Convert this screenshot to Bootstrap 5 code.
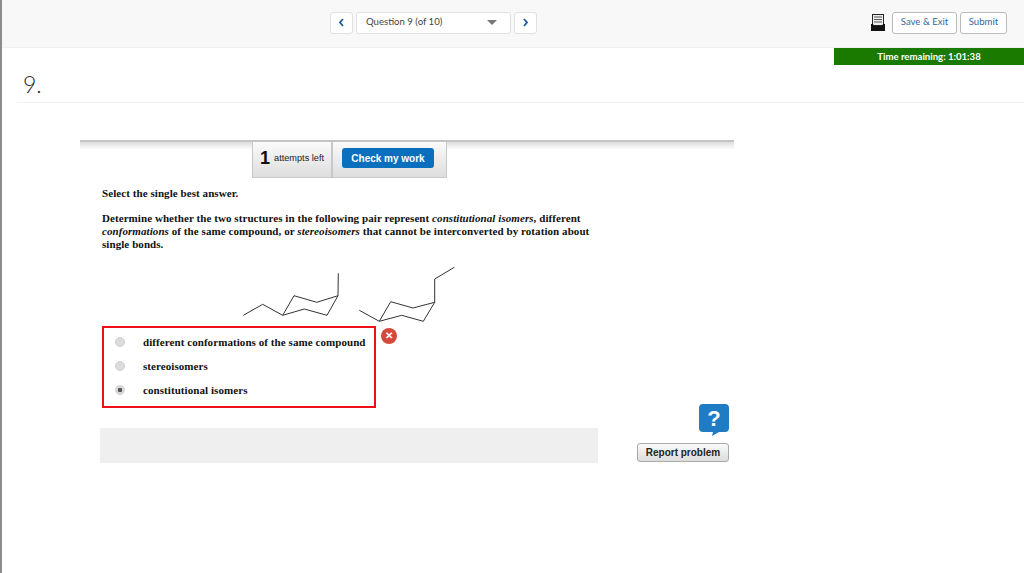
<!DOCTYPE html>
<html lang="en"><head>
  <meta charset="UTF-8">
  <meta name="viewport" content="width=device-width, initial-scale=1.0">
  <title>Question 9</title>
  <link href="https://cdn.jsdelivr.net/npm/bootstrap@5.3.0/dist/css/bootstrap.min.css" rel="stylesheet">
  <style>
    html, body { height: 100%; }
    body {
      font-family: "Lato", "Liberation Sans", sans-serif;
      background: #fff;
      overflow: hidden;
    }
    .left-rule { border-left: 2px solid #8c8c8c; min-height: 573px; }
    .top-bar {
      height: 48px;
      padding-bottom: 2px;
      background: #f8f8f8;
      border-bottom: 1px solid #f1f1f1;
    }
    .bar-side { width: 328px; }
    .nav-box {
      height: 22px;
      background: #fff;
      border: 1px solid #e1e1e1;
      border-radius: 3px;
      color: #444;
      font-size: 9.6px;
    }
    .nav-arrow { width: 23px; }
    .question-pick { width: 155px; padding: 0 13px 0 9px; margin: 0 3px; }
    .pick-caret {
      width: 0; height: 0;
      border-left: 5px solid transparent;
      border-right: 5px solid transparent;
      border-top: 5px solid #777;
    }
    .head-actions { padding-right: 17px; gap: 3px; }
    .head-btn {
      height: 22px;
      padding: 0;
      background: #fff;
      border: 1px solid #bbb;
      border-radius: 3px;
      color: #35659c;
      font-size: 9.6px;
    }
    .save-btn { width: 65px; }
    .send-btn { width: 47px; }
    .timer-box {
      width: 190px;
      height: 17px;
      background: #1a7a00;
      color: #fff;
      font-size: 9.6px;
      font-weight: 700;
      line-height: 17px;
      text-align: center;
    }
    .num-head {
      margin: 0 0 0 15px;
      padding: 7px 0 5px 6px;
      height: 38px;
      border-bottom: 1px solid #f2f2f2;
      color: #222;
      font-size: 23px;
      font-weight: 300;
      line-height: 24px;
    }
    .quiz-area { width: 654px; margin: 37px 0 0 78px; }
    .tool-line {
      height: 38px;
      padding-left: 172px;
      border-top: 2px solid #c4c4c4;
      background: linear-gradient(#ddd, #fff 8px) no-repeat top / 100% 8px;
    }
    .tool-cell {
      height: 36px;
      padding-bottom: 3px;
      border: 1px solid #c8c8c8;
      border-top: 0;
      background: linear-gradient(#fafafa, #dedede);
    }
    .attempts-cell { width: 80px; padding-left: 7px; gap: 4px; font-family: "Liberation Sans", sans-serif; font-size: 9.2px; color: #222; }
    .attempts-cell b { font-size: 18px; color: #111; line-height: 1; }
    .attempts-cell span { padding-top: 1px; }
    .check-cell { width: 115px; padding-left: 9px; }
    .check-btn {
      height: 20px;
      width: 92px;
      padding: 0;
      border: 0;
      border-radius: 3px;
      background: #0a70bd;
      color: #fff;
      font-family: "Liberation Sans", sans-serif;
      font-size: 10px;
      font-weight: 700;
    }
    .prob-text {
      margin: 9px 0 0 22px;
      width: 495px;
      font-family: "Liberation Serif", serif;
      font-size: 11px;
      font-weight: 700;
      line-height: 13px;
      letter-spacing: .07px;
      color: #111;
    }
    .prob-text p { margin: 0 0 12px; }
    .pair-draw { display: block; margin: -1px 0 0 160px; }
    .pair-draw polyline { fill: none; stroke: #333; stroke-width: 1; }
    .choice-row { margin-left: 22px; gap: 5px; margin-top: 2px; }
    .choice-box {
      width: 274px;
      height: 82px;
      border: 2px solid #ef0f16;
      padding: 0 0 2px 11px;
      font-family: "Liberation Serif", serif;
      font-size: 11px;
      font-weight: 700;
      letter-spacing: .07px;
      color: #111;
    }
    .choice-line { height: 24px; gap: 18px; }
    .fake-radio {
      width: 10px; height: 10px;
      border-radius: 50%;
      background: #dcdcdc;
      border: 1px solid #cfcfcf;
      flex: none;
    }
    .fake-radio.picked { background: radial-gradient(#555 0 2px, #dcdcdc 2.6px); }
    .wrong-mark {
      width: 16px; height: 16px;
      margin-top: 2px;
      border-radius: 50%;
      background: #d6483c;
      color: #fff;
      font-family: "Liberation Sans", sans-serif;
      font-size: 10px;
      font-weight: 700;
      line-height: 16px;
      text-align: center;
    }
    .foot-row { margin-left: 20px; }
    .grey-band { width: 498px; height: 35px; margin-top: 20px; background: #efefef; }
    .report-side { width: 92px; margin: -4px 0 0 39px; }
    .report-btn {
      height: 19px;
      width: 92px;
      margin-top: 7px;
      padding: 0 0 1px;
      border: 1px solid #aaa;
      border-radius: 3px;
      background: linear-gradient(#fafafa, #dcdcdc);
      color: #222;
      font-family: "Liberation Sans", sans-serif;
      font-size: 10px;
      font-weight: 700;
    }
  </style>
</head>
<body>
  <div class="left-rule">
    <div class="top-bar d-flex align-items-center">
      <div class="bar-side"></div>
      <div class="d-flex align-items-center">
        <div class="nav-box nav-arrow d-flex align-items-center justify-content-center">
          <svg width="7" height="9" viewBox="0 0 7 9"><polyline points="5,1 2,4.5 5,8" fill="none" stroke="#1d5a9c" stroke-width="1.8"/></svg>
        </div>
        <div class="nav-box question-pick d-flex align-items-center justify-content-between">
          <span>Question 9 (of 10)</span>
          <span class="pick-caret"></span>
        </div>
        <div class="nav-box nav-arrow d-flex align-items-center justify-content-center">
          <svg width="7" height="9" viewBox="0 0 7 9"><polyline points="2,1 5,4.5 2,8" fill="none" stroke="#1d5a9c" stroke-width="1.8"/></svg>
        </div>
      </div>
      <div class="head-actions d-flex align-items-center ms-auto">
        <svg class="me-1" width="14" height="17" viewBox="0 0 14 17">
          <rect x="1.500" y="0.5" width="11" height="11" fill="#eee" stroke="#222"/>
          <path d="M3 3h8M3 5.500h8M3 8h8" stroke="#555"/>
          <path d="M0 10h2l1 2h8l1-2h2v7H0z" fill="#111"/>
        </svg>
        <button class="head-btn save-btn">Save &amp; Exit</button>
        <button class="head-btn send-btn">Submit</button>
      </div>
    </div>
    <div class="d-flex justify-content-end">
      <div class="timer-box">Time remaining: 1:01:38</div>
    </div>
    <h2 class="num-head">9.</h2>

    <div class="quiz-area">
      <div class="tool-line d-flex">
        <div class="tool-cell attempts-cell d-flex align-items-center"><b>1</b><span>attempts left</span></div>
        <div class="tool-cell check-cell d-flex align-items-center"><button class="check-btn">Check my work</button></div>
      </div>
      <div class="prob-text">
        <p>Select the single best answer.</p>
        <p>Determine whether the two structures in the following pair represent <i>constitutional isomers</i>, different <i>conformations</i> of the same compound, or <i>stereoisomers</i> that cannot be interconverted by rotation about single bonds.</p>
      </div>
      <svg class="pair-draw" width="230" height="62" viewBox="240 262 230 62">
        <polyline points="243.3,315.3 262.7,304.3 282.7,315.3 294,295.7 316.7,302.3 338,295.7 327,315.3 304.3,309 282.7,315.3"/>
        <polyline points="338,295.7 338.3,273.3"/>
        <polyline points="359.3,310.3 379.3,321.3 390.7,301.7 413,308 434.7,302.3 423.3,321.3 401.7,315.3 379.3,321.3"/>
        <polyline points="434.7,302.3 434.7,279 454.3,267.3"/>
      </svg>
      <div class="choice-row d-flex">
        <div class="choice-box d-flex flex-column justify-content-center">
          <div class="choice-line d-flex align-items-center"><span class="fake-radio"></span><span>different conformations of the same compound</span></div>
          <div class="choice-line d-flex align-items-center"><span class="fake-radio"></span><span>stereoisomers</span></div>
          <div class="choice-line d-flex align-items-center"><span class="fake-radio picked"></span><span>constitutional isomers</span></div>
        </div>
        <div class="wrong-mark">&#10005;</div>
      </div>
      <div class="foot-row d-flex">
        <div class="grey-band"></div>
        <div class="report-side d-flex flex-column align-items-end">
          <svg width="30" height="32" viewBox="0 0 30 32">
            <path d="M4 0h22a4 4 0 0 1 4 4v20a4 4 0 0 1-4 4H20l-7 4 1-4H4a4 4 0 0 1-4-4V4a4 4 0 0 1 4-4z" fill="#1f7cc4"/>
            <text x="15" y="22" text-anchor="middle" fill="#fff" font-family="Liberation Sans" font-size="22" font-weight="700">?</text>
          </svg>
          <button class="report-btn">Report problem</button>
        </div>
      </div>
    </div>
  </div>
  <script src="https://cdn.jsdelivr.net/npm/bootstrap@5.3.0/dist/js/bootstrap.bundle.min.js"></script>
</body></html>
